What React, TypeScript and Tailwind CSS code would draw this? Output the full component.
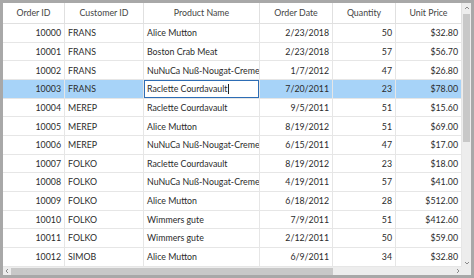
const rows: [string, string, string, string, string, string][] = [
  ["10000", "FRANS", "Alice Mutton", "2/23/2018", "50", "$32.80"],
  ["10001", "FRANS", "Boston Crab Meat", "2/23/2018", "57", "$56.70"],
  ["10002", "FRANS", "NuNuCa Nuß-Nougat-Creme", "1/7/2012", "47", "$26.80"],
  ["10003", "FRANS", "Raclette Courdavault", "7/20/2011", "23", "$78.00"],
  ["10004", "MEREP", "Raclette Courdavault", "9/5/2011", "51", "$15.60"],
  ["10005", "MEREP", "Alice Mutton", "8/19/2012", "51", "$69.00"],
  ["10006", "MEREP", "NuNuCa Nuß-Nougat-Creme", "6/15/2011", "47", "$17.00"],
  ["10007", "FOLKO", "Raclette Courdavault", "8/19/2012", "23", "$18.00"],
  ["10008", "FOLKO", "NuNuCa Nuß-Nougat-Creme", "4/19/2011", "57", "$41.00"],
  ["10009", "FOLKO", "Alice Mutton", "6/18/2012", "28", "$512.00"],
  ["10010", "FOLKO", "Wimmers gute", "7/9/2011", "51", "$412.60"],
  ["10011", "FOLKO", "Wimmers gute", "2/12/2011", "50", "$59.00"],
  ["10012", "SIMOB", "Alice Mutton", "6/9/2011", "34", "$32.80"],
];

const headers = ["Order ID", "Customer ID", "Product Name", "Order Date", "Quantity", "Unit Price"];
const widths = ["w-[62px]", "w-[79px]", "w-[116px]", "w-[73px]", "w-[63px]", "w-[66px]"];
const aligns = ["justify-end", "justify-start", "justify-start", "justify-end", "justify-end", "justify-end"];

function Chevron({ d }: { d: string }) {
  return (
    <svg width="6" height="6" viewBox="0 0 6 6" fill="none" stroke="#8a8a8a" strokeWidth="1">
      <path d={d} />
    </svg>
  );
}

export default function App() {
  return (
    <div className="flex h-[278px] w-[474px] flex-col border-[3px] border-[#a8a8a8] bg-white font-['Lato',sans-serif] text-[8.8px] text-[#2b2b2b]">
      <div className="flex min-h-0 flex-1">
        <div className="flex w-[459px] flex-col">
          <div className="flex h-[21px] border-b border-[#e0e0e0] text-[#444]">
            {headers.map((h, i) => (
              <div key={h} className={`${widths[i]} flex items-center justify-center border-r border-[#e0e0e0]`}>
                {h}
              </div>
            ))}
          </div>
          {rows.map((r, ri) => {
            const selected = ri === 3;
            return (
              <div
                key={r[0]}
                className={`flex h-[18.67px] border-b border-[#e6e6e6] ${selected ? "bg-[#a7d3f8]" : ""}`}
              >
                {r.map((c, ci) => {
                  if (selected && ci === 2) {
                    return (
                      <div key={ci} className={`${widths[ci]} flex items-center border-r border-[#e6e6e6]`}>
                        <div className="flex h-full w-full items-center border-[1.5px] border-[#2d6db5] bg-white px-[2px]">
                          {c}
                          <span className="ml-px inline-block h-[10px] w-px bg-[#222]" />
                        </div>
                      </div>
                    );
                  }
                  return (
                    <div
                      key={ci}
                      className={`${widths[ci]} flex items-center overflow-hidden whitespace-nowrap border-r border-[#e6e6e6] px-[3px] ${aligns[ci]}`}
                    >
                      {c}
                    </div>
                  );
                })}
              </div>
            );
          })}
        </div>
        <div className="flex w-[9px] flex-col items-center bg-[#ededed]">
          <div className="flex h-[9px] items-center justify-center">
            <Chevron d="M1 4 L3 2 L5 4" />
          </div>
          <div className="my-[2px] h-[128px] w-[7px] bg-[#c8c8c8]" />
          <div className="flex-1" />
          <div className="flex h-[9px] items-center justify-center">
            <Chevron d="M1 2 L3 4 L5 2" />
          </div>
        </div>
      </div>
      <div className="flex h-[8px]">
        <div className="flex w-[459px] items-center bg-[#ededed]">
          <div className="flex w-[8px] items-center justify-center">
            <Chevron d="M4 1 L2 3 L4 5" />
          </div>
          <div className="h-[7px] w-[322px] bg-[#c8c8c8]" />
          <div className="flex-1" />
          <div className="flex w-[8px] items-center justify-center">
            <Chevron d="M2 1 L4 3 L2 5" />
          </div>
        </div>
        <div className="w-[9px] bg-[#ededed]" />
      </div>
    </div>
  );
}
